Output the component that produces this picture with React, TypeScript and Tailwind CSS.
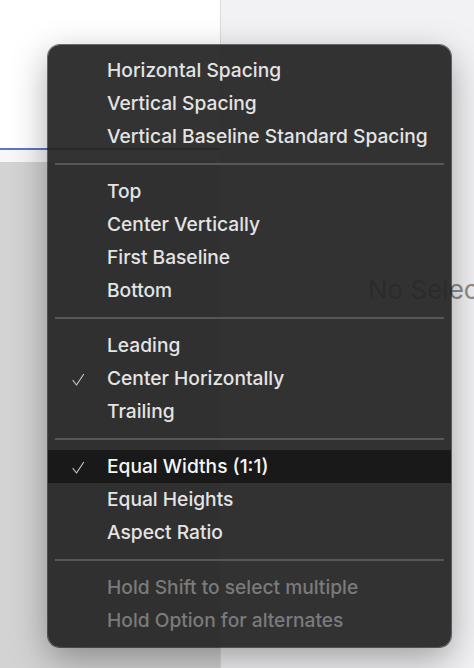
import React from "react";

type Item = { label: string; checked?: boolean; highlighted?: boolean; disabled?: boolean };

const groups: Item[][] = [
  [
    { label: "Horizontal Spacing" },
    { label: "Vertical Spacing" },
    { label: "Vertical Baseline Standard Spacing" },
  ],
  [
    { label: "Top" },
    { label: "Center Vertically" },
    { label: "First Baseline" },
    { label: "Bottom" },
  ],
  [
    { label: "Leading" },
    { label: "Center Horizontally", checked: true },
    { label: "Trailing" },
  ],
  [
    { label: "Equal Widths (1:1)", checked: true, highlighted: true },
    { label: "Equal Heights" },
    { label: "Aspect Ratio" },
  ],
  [
    { label: "Hold Shift to select multiple", disabled: true },
    { label: "Hold Option for alternates", disabled: true },
  ],
];

function Check() {
  return (
    <svg width="14" height="14" viewBox="0 0 14 14" fill="none">
      <path d="M2 7.5 L5.5 12 L12.5 1.5" stroke="#c4c4c4" strokeWidth="1.2" strokeLinecap="round" strokeLinejoin="round" />
    </svg>
  );
}

function Row({ item }: { item: Item }) {
  return (
    <div
      className={
        "flex h-[33px] items-center " + (item.highlighted ? "bg-[#191919]" : "")
      }
    >
      <div className="flex w-[59px] shrink-0 items-center justify-center pt-[2px]">
        {item.checked ? <Check /> : null}
      </div>
      <span
        className={
          "whitespace-nowrap text-[19.2px] font-medium leading-none " +
          (item.disabled
            ? "text-[#7b7b7b]"
            : item.highlighted
            ? "text-[#f6f6f6]"
            : "text-[#e4e4e4]")
        }
      >
        {item.label}
      </span>
    </div>
  );
}

export default function App() {
  return (
    <div
      className="relative flex h-[668px] w-[474px] overflow-hidden"
      style={{ fontFamily: "Inter, 'Noto Sans', 'Liberation Sans', sans-serif" }}
    >
      {/* left column */}
      <div className="flex w-[220px] shrink-0 flex-col">
        <div className="h-[148px] bg-white" />
        <div className="h-[2px] bg-[#5a78c2]" />
        <div className="h-[12px] bg-[#f7f7f7]" />
        <div className="flex-1 bg-[#d3d3d3]" />
      </div>
      {/* right column */}
      <div className="flex flex-1 flex-col overflow-hidden border-l border-[#dadada] bg-[#f2f2f4]">
        <div className="pl-[147px] pt-[275px]">
          <span className="whitespace-nowrap text-[26px] leading-[30px] text-[#8c8c8c]">
            No Selection
          </span>
        </div>
      </div>

      {/* popup menu */}
      <div className="absolute left-[48px] top-[45px] flex h-[602px] w-[403px] flex-col overflow-hidden rounded-[12px] bg-[rgba(36,36,36,0.93)] pb-[7px] pt-[9px] shadow-[0_12px_36px_rgba(0,0,0,0.35),0_0_0_1px_rgba(0,0,0,0.55)]">
        {groups.map((g, gi) => (
          <div key={gi} className="flex flex-col">
            {gi > 0 && (
              <div className="flex h-[22px] items-center px-[7px]">
                <div className="h-[1.5px] w-full bg-[#575757]" />
              </div>
            )}
            {g.map((it) => (
              <Row key={it.label} item={it} />
            ))}
          </div>
        ))}
      </div>
    </div>
  );
}
